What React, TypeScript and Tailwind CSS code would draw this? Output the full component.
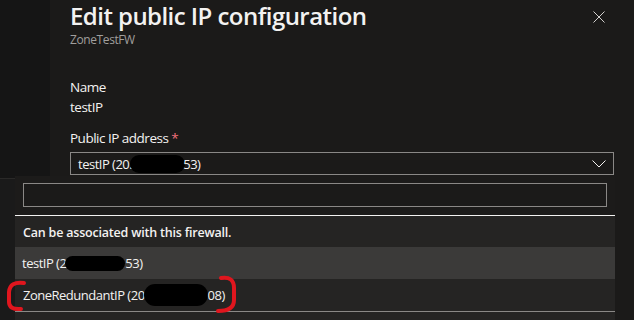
import React from "react";

function Blob({ w, h, className = "" }: { w: string; h: string; className?: string }) {
  return <span className={`inline-block rounded-full bg-black align-middle ${w} ${h} ${className}`} />;
}

export default function App() {
  return (
    <div className="relative flex h-[320px] w-[634px] overflow-hidden bg-[#1b1a19] font-['Open_Sans',sans-serif] text-[#f3f2f1]">
      {/* left dim strip */}
      <div className="flex w-[50px] shrink-0 flex-col">
        <div className="h-[178px] bg-[#151515]" />
        <div className="flex-1 border-t border-[#2a2928] bg-[#1a1a1a]" />
      </div>

      {/* panel */}
      <div className="flex flex-1 flex-col pl-[20px] pr-[20px]">
        <div className="flex items-start justify-between">
          <div className="flex flex-col">
            <h1 className="text-[24px] font-semibold leading-8 tracking-[-0.55px]">Edit public IP configuration</h1>
            <div className="text-[12px] leading-4 text-[#a19f9d] tracking-[-0.4px]">ZoneTestFW</div>
          </div>
          <svg width="12" height="12" viewBox="0 0 12 12" className="mr-[9px] mt-[11px]">
            <path d="M0.5 0.5 L11.5 11.5 M11.5 0.5 L0.5 11.5" stroke="#d2d0ce" strokeWidth="1" fill="none" />
          </svg>
        </div>

        <div className="mt-[29px] text-[13.5px] leading-5 tracking-[-0.5px]">Name</div>
        <div className="text-[13.5px] leading-5 tracking-[-0.5px]">testIP</div>
        <div className="mt-[11px] text-[13.5px] leading-5 tracking-[-0.5px]">
          Public IP address <span className="text-[#f1707b]">*</span>
        </div>
        <div className="mt-[4px] flex h-[23px] items-center justify-between border border-[#8a8886] pl-[7px] pr-[7px]">
          <span className="flex items-center text-[13px] leading-5 tracking-[-0.5px]">
            testIP (20.
            <Blob w="w-[55px]" h="h-[18px]" className="-ml-[2px] -mr-[2px]" />
            53)
          </span>
          <svg width="14" height="8" viewBox="0 0 14 8">
            <path d="M0.5 0.5 L7 7 L13.5 0.5" stroke="#f3f2f1" strokeWidth="1" fill="none" />
          </svg>
        </div>
      </div>

      {/* dropdown popup */}
      <div className="absolute bottom-0 left-[15px] top-[176px] flex w-[600px] flex-col bg-[#1c1b1a]">
        <div className="px-[8px] pb-[8px] pt-[7px]">
          <div className="h-[24px] border border-[#8a8886] bg-[#1b1a19]" />
        </div>
        <div className="flex flex-1 flex-col border-t border-[#f3f2f1] bg-[#252423] text-[13px] leading-5 tracking-[-0.5px]">
          <div className="flex h-[31px] items-center pl-[8px] pt-[2px] text-[12.5px] font-semibold tracking-[-0.2px]">Can be associated with this firewall.</div>
          <div className="flex h-[32px] items-center bg-[#3b3a39] pl-[7px]">
            testIP (2
            <Blob w="w-[60px]" h="h-[15px]" className="-ml-[1px]" />
            53)
          </div>
          <div className="flex h-[33px] items-center border-b border-[#8a8886] pl-[8px]">
            ZoneRedundantIP (20
            <Blob w="w-[64px]" h="h-[22px]" className="-ml-[1px]" />
            08)
          </div>
        </div>
      </div>

      {/* red annotation brackets */}
      <svg className="pointer-events-none absolute left-0 top-0" width="634" height="320" viewBox="0 0 634 320">
        <path d="M24 283 Q10 281 9 292 L9 302 Q9 310 21 309" stroke="#e0161e" strokeWidth="4" fill="none" strokeLinecap="round" />
        <path d="M221 278 Q234 276 234 288 L234 300 Q234 311 218 311" stroke="#e0161e" strokeWidth="4" fill="none" strokeLinecap="round" />
      </svg>
    </div>
  );
}
